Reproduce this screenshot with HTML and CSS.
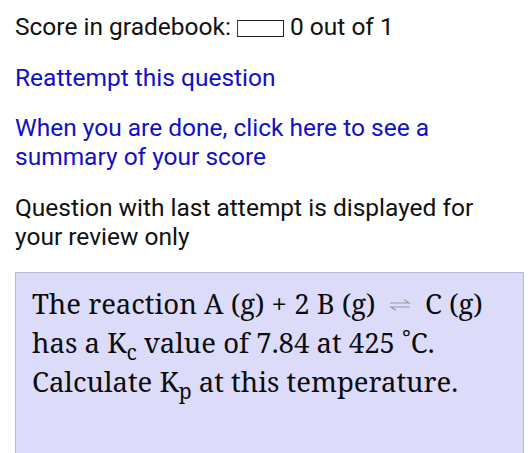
FILE: index.html
```html
<!DOCTYPE html>
<html lang="en">
<head>
    <meta charset="UTF-8">
    <meta name="viewport" content="width=device-width, initial-scale=1.0">
    <title>Review</title>
    <link rel="stylesheet" href="styles.css">
</head>
<body>
    <div class="page">
        <p class="score">Score in gradebook: <span class="score-box"></span> 0 out of 1</p>
        <p><a class="link" href="#">Reattempt this question</a></p>
        <p><a class="link" href="#">When you are done, click here to see a summary of your score</a></p>
        <p>Question with last attempt is displayed for your review only</p>

        <!-- Question body -->
        <div class="question">
            <p>The reaction A (g) + 2 B (g) <svg class="eq" width="24" height="14" viewBox="0 0 24 14"><path d="M2 5 H21 L16 1.5 M22 9 H3 L8 12.5" fill="none" stroke="#9a9a9a" stroke-width="1.2"/></svg> C (g) has a K<sub>c</sub> value of 7.84 at 425 <span class="deg">&#176;</span>C. Calculate K<sub>p</sub> at this temperature.</p>
        </div>
    </div>
</body>
</html>
```

FILE: styles.css
```css
* {
    margin: 0;
    padding: 0;
    box-sizing: border-box;
}

body {
    font-family: 'Roboto', 'Liberation Sans', sans-serif;
    font-size: 24.5px;
    line-height: 29px;
    color: #111;
    background: #fff;
    overflow: hidden;
}

.page {
    padding: 12px 5px 0 15px;
    display: flex;
    flex-direction: column;
    gap: 21.5px;
}

.link {
    color: #1010c8;
    text-decoration: none;
}

/* Score checkbox */
.score-box {
    display: inline-block;
    width: 47px;
    height: 17px;
    border: 1.5px solid #222;
    border-left-color: #b01010;
    vertical-align: -2px;
}

/* Question Box */
.question {
    background-color: #dcdcfa;
    border: 1px solid #b9b9d6;
    border-bottom: none;
    padding: 11px 16px 80px 16px;
    margin-top: 0;
    font-family: 'Noto Serif', 'DejaVu Serif', 'Liberation Serif', serif;
    font-size: 27.5px;
    line-height: 39px;
    color: #0c0c0c;
}

.question sub {
    font-size: 21px;
    line-height: 0;
    vertical-align: baseline;
    position: relative;
    top: 7px;
}

.eq {
    margin: 0 6px 0 5px;
    vertical-align: 2px;
}

.deg {
    font-size: 22px;
    line-height: 0;
    vertical-align: baseline;
    position: relative;
    top: -7px;
}
```
